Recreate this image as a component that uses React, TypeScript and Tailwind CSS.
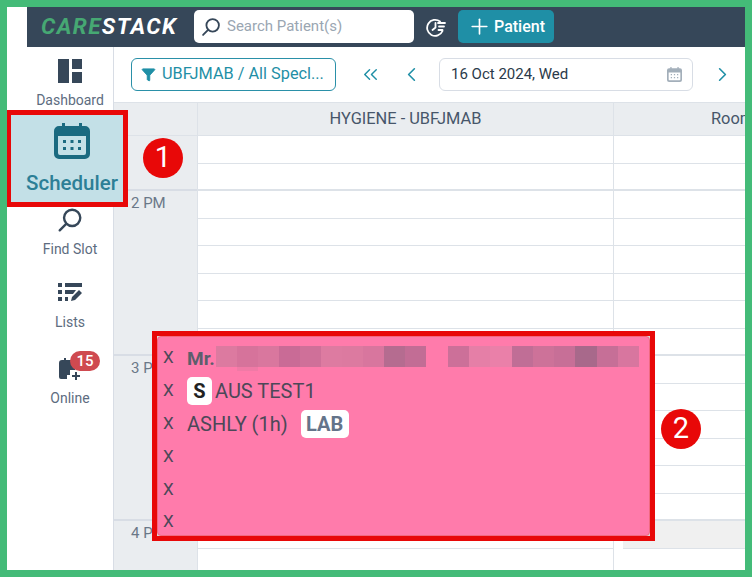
import { ChevronLeft, ChevronRight, ChevronsLeft, Filter, Plus } from 'lucide-react';

const hourRows = [
  { label: '', thick: false },
  { label: '', thick: true },
  { label: '2 PM', thick: false },
  { label: '', thick: false },
  { label: '', thick: false },
  { label: '', thick: false },
  { label: '', thick: false },
  { label: '', thick: true },
  { label: '3 PM', thick: false },
  { label: '', thick: false },
  { label: '', thick: false },
  { label: '', thick: false },
  { label: '', thick: false },
  { label: '', thick: true },
  { label: '4 PM', thick: false },
  { label: '', thick: false },
];

const mosaicA = ['#dc7aa0', '#d6739b', '#d9779e', '#c96b96', '#cf7099', '#dd7ba1', '#dc7aa0', '#d8769e', '#b56c90', '#c26d95'];
const mosaicB = ['#cc7099', '#e57fa7', '#ea80a9', '#c06e96', '#cd7299', '#c76f97', '#a8698b', '#c66f97', '#d8769f'];

function SearchIcon({ className }: { className: string }) {
  return (
    <svg viewBox="0 0 24 24" fill="none" stroke="currentColor" strokeWidth="2.2" className={className}>
      <circle cx="14" cy="10" r="7.5" />
      <path d="M8.5 15.5 2.5 21.5" strokeLinecap="round" />
    </svg>
  );
}

function CalendarIcon({ className }: { className: string }) {
  return (
    <svg viewBox="0 0 36 36" fill="currentColor" className={className}>
      <path d="M8 0h3v3h14V0h3v3h3a5 5 0 0 1 5 5v23a5 5 0 0 1-5 5H5a5 5 0 0 1-5-5V8a5 5 0 0 1 5-5h3zM4 13v17a2 2 0 0 0 2 2h24a2 2 0 0 0 2-2V13z" />
      <path d="M9 17h3v3H9zM16.500 17h3v3h-3zM24 17h3v3h-3zM9 24h3v3H9zM16.500 24h3v3h-3zM24 24h3v3h-3z" />
    </svg>
  );
}

function NavItem({ label, icon, className }: { label: string; icon: React.ReactNode; className: string }) {
  return (
    <div className={`flex flex-col items-center ${className}`}>
      <div className="mb-[7px] flex h-[26px] items-center justify-center">{icon}</div>
      <span className="text-[14px] leading-[18px] text-[#5d6c80]">{label}</span>
    </div>
  );
}

export default function App() {
  return (
    <div className="relative h-[577px] w-[752px] overflow-hidden border-[7px] border-[#44bb78] bg-white font-['Roboto',sans-serif]">
      <div className="ml-[20px] flex h-[40px] items-start bg-[#364759] pt-[3px]">
        <div className="ml-[14px] w-[153px] text-[22.500px] leading-[33px] font-bold tracking-[1.400px] text-white italic">
          <span className="text-[#46a873]">CARE</span>STACK
        </div>
        <div className="flex h-[33px] w-[220px] items-center gap-[6px] rounded-[5px] bg-white pl-[7px]">
          <SearchIcon className="h-[20px] w-[20px] text-[#364759]" />
          <span className="text-[15px] text-[#9aa6b2]">Search Patient(s)</span>
        </div>
        <svg viewBox="0 0 20 20" fill="none" stroke="white" strokeWidth="1.8" className="mt-[7px] ml-[12px] h-[20px] w-[20px]">
          <path d="M14 4.500A8 8 0 1 0 16.500 14" strokeLinecap="round" />
          <path d="M9.500 6v4.500L6.500 13M12 6h7M13 9.500h5M12.500 13h4" strokeLinecap="round" />
        </svg>
        <div className="ml-[12px] flex h-[33px] w-[96px] items-center justify-center gap-[2px] rounded-[5px] bg-[#1f8fa6] text-[16px] font-medium text-white">
          <Plus size={25} strokeWidth={1.6} />
          Patient
        </div>
      </div>

      <div className="flex h-[523px]">
        <aside className="w-[107px] shrink-0 border-r border-[#d8dde5] pl-[20px]">
          <NavItem
            className="pt-[11px]"
            label="Dashboard"
            icon={
              <svg viewBox="0 0 24 24" fill="#364759" className="h-[24px] w-[24px]">
                <path d="M0 0h11v24H0zM14 0h10v10H14zM14 13h10v11H14z" />
              </svg>
            }
          />
          <div className="h-[98px]" />
          <NavItem
            className="pb-[22px]"
            label="Find Slot"
            icon={<SearchIcon className="h-[26px] w-[26px] text-[#364759]" />}
          />
          <NavItem
            className="pb-[25px]"
            label="Lists"
            icon={
              <svg viewBox="0 0 24 20" fill="#364759" className="h-[20px] w-[24px]">
                <path d="M0 0h4v4H0zM7 0h17v4H7zM0 7h4v4H0zM7 7h11l-3 4H7zM0 14h4v4H0zM7 14h3v4H7zM13 18l1-4 7-7 3 3-7 7z" />
              </svg>
            }
          />
          <NavItem
            className="relative"
            label="Online"
            icon={
              <svg viewBox="0 0 24 24" fill="#364759" className="h-[24px] w-[24px]">
                <path d="M6 1h2v2h6v2h3v8h-5v5H9v4H3a2 2 0 0 1-2-2V6a3 3 0 0 1 3-3h2zM6 12h2v2H6zM11 12h0zM6 17h2v2H6zM10 14h2v2h-2z" />
                <path d="M17 15h2v3h3v2h-3v3h-2v-3h-3v-2h3z" />
              </svg>
            }
          />
        </aside>

        <main className="min-w-0 flex-1">
          <div className="flex h-[55px] items-center pl-[17px]">
            <div className="flex h-[33px] w-[205px] shrink-0 items-center gap-[6px] rounded-[6px] border border-[#2a90a8] pl-[9px] text-[16.300px] text-[#1f8fa6]">
              <Filter size={15} fill="#1f8fa6" strokeWidth={1.5} />
              UBFJMAB / All Specl...
            </div>
            <ChevronsLeft size={23} strokeWidth={1.5} className="ml-[23px] text-[#1f8fa6]" />
            <ChevronLeft size={23} strokeWidth={1.7} className="ml-[18px] text-[#1f8fa6]" />
            <div className="ml-[16px] flex h-[33px] w-[254px] items-center justify-between rounded-[6px] border border-[#d8dde5] pr-[10px] pl-[11px] text-[15px] text-[#2b3a4a]">
              16 Oct 2024, Wed
              <CalendarIcon className="h-[15px] w-[15px] text-[#a3afba]" />
            </div>
            <ChevronRight size={23} strokeWidth={1.7} className="ml-[18px] text-[#1f8fa6]" />
          </div>

          <div className="flex h-[34px] border-y border-[#dde2e8] bg-[#eaedf0] text-[16.400px] leading-[32px] text-[#47566a]">
            <div className="w-[84px] shrink-0 border-r border-[#dde2e8]" />
            <div className="w-[416px] shrink-0 border-r border-[#dde2e8] text-center">HYGIENE - UBFJMAB</div>
            <div className="flex-1 pl-[97px] whitespace-nowrap">Room</div>
          </div>

          <div className="flex">
            <div className="w-[83px] shrink-0 bg-[#eaedf0]">
              {hourRows.map((row, i) => (
                <div
                  key={i}
                  className={`h-[27.500px] pl-[17px] text-[15px] leading-[24px] text-[#6a7888] ${row.thick ? 'border-b-[2px] border-[#d8dde5]' : ''}`}
                >
                  {row.label}
                </div>
              ))}
            </div>
            <div className="w-[417px] shrink-0 border-x border-[#dde2e8]">
              {hourRows.map((row, i) => (
                <div key={i} className={`h-[27.500px] border-[#dde2e8] ${row.thick ? 'border-b-[2px]' : 'border-b'}`} />
              ))}
            </div>
            <div className="min-w-0 flex-1">
              {hourRows.map((row, i) => (
                <div
                  key={i}
                  className={`h-[27.500px] border-[#dde2e8] ${row.thick ? 'border-b-[2px]' : 'border-b'} ${i === 14 ? 'ml-[9px] bg-[#f0f0f0]' : ''}`}
                />
              ))}
            </div>
          </div>
        </main>
      </div>

      {/* notification badge */}
      <div className="absolute top-[344px] left-[63px] flex h-[20px] w-[30px] items-center justify-center rounded-full bg-[#cf4a50] text-[15px] font-medium text-white">
        15
      </div>

      {/* annotation 1 */}
      <div className="absolute top-[103px] -left-px flex h-[97px] w-[122px] flex-col items-center border-[5px] border-[#e80808] bg-[#c3e0e7] pl-[10px]">
        <CalendarIcon className="mt-[8px] h-[36px] w-[36px] text-[#1a6a80]" />
        <span className="mt-[12px] text-[20.500px] leading-[24px] font-medium whitespace-nowrap text-[#2c7f96]">Scheduler</span>
      </div>
      <div className="absolute top-[131px] left-[136px] flex h-[40px] w-[40px] items-center justify-center rounded-full bg-[#e80808] text-[29px] text-white">
        1
      </div>

      {/* annotation 2: pink appointment */}
      <div className="absolute top-[324px] left-[145px] h-[210px] w-[503px] border-[5px] border-[#e80808] bg-[#d8d8d8]">
        <div className="h-[200px] rounded-[4px] border border-[#f06a80] bg-[#ff7bab] pt-[5px] pl-[5px] text-[20px] text-[#4c4858]">
          <div className="flex h-[32.700px] items-start">
            <span className="w-[24px] text-[17px] leading-[30px]">X</span>
            <span className="text-[19px] leading-[34px] font-bold text-[#5d5e6c]">Mr.</span>
            <div className="relative mt-[4px] ml-[1px] flex h-[21px]">
              {mosaicA.map((c, i) => (
                <div key={i} className="h-full w-[21px]" style={{ backgroundColor: c }} />
              ))}
              <div className="ml-[22px] flex">
                {mosaicB.map((c, i) => (
                  <div key={i} className="h-full w-[21.300px]" style={{ backgroundColor: c }} />
                ))}
              </div>
              <div className="absolute top-[21px] left-[21px] h-[4px] w-[21px] bg-[#f07aa6]" />
            </div>
          </div>
          <div className="flex h-[32.700px] items-center">
            <span className="w-[24px] text-[17px]">X</span>
            <span className="flex h-[28px] w-[25px] items-center justify-center rounded-[5px] bg-white font-bold text-[#222]">S</span>
            <span className="ml-[3px]">AUS TEST1</span>
          </div>
          <div className="flex h-[32.700px] items-center">
            <span className="w-[24px] text-[17px]">X</span>
            <span>ASHLY (1h)</span>
            <span className="ml-[13px] flex h-[28px] w-[48px] items-center justify-center rounded-[5px] bg-white font-bold text-[#64748a]">LAB</span>
          </div>
          <div className="h-[32.700px] text-[17px] leading-[32.700px]">X</div>
          <div className="h-[32.700px] text-[17px] leading-[32.700px]">X</div>
          <div className="h-[32.700px] text-[17px] leading-[32.700px]">X</div>
        </div>
      </div>
      <div className="absolute top-[402px] left-[654px] flex h-[40px] w-[40px] items-center justify-center rounded-full bg-[#e80808] text-[29px] text-white">
        2
      </div>
    </div>
  );
}
